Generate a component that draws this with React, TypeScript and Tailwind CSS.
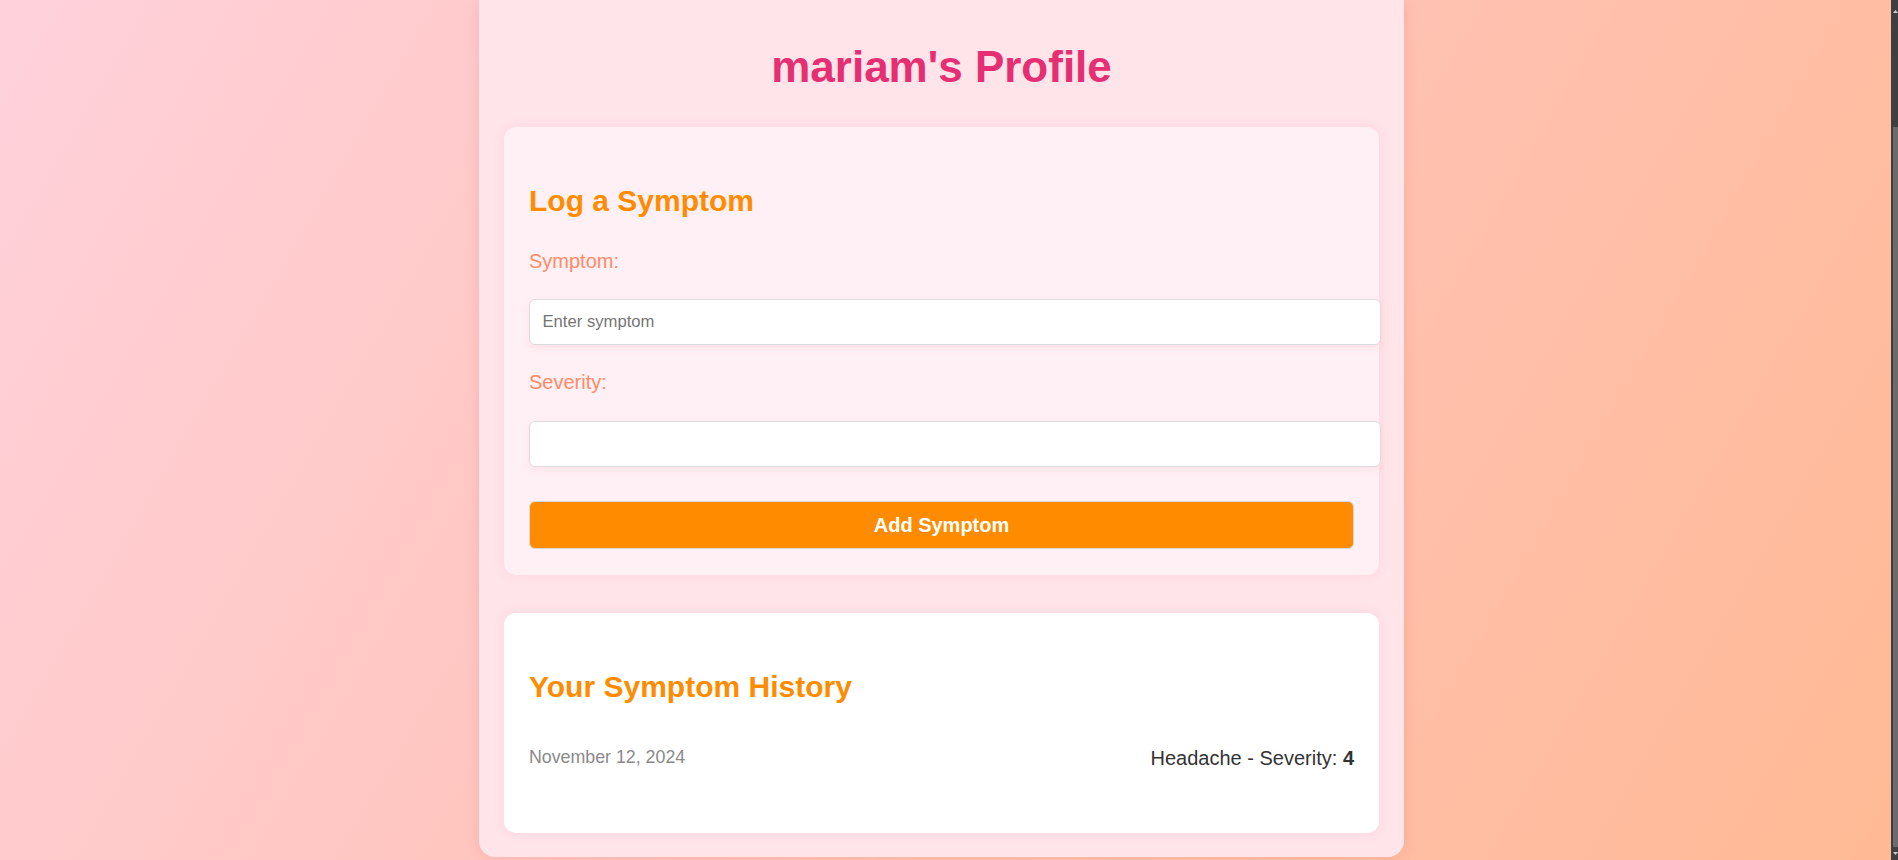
const FONT = { fontFamily: '"Liberation Sans", Arial, sans-serif' };

function Field({ label, placeholder, gapClass }: { label: string; placeholder?: string; gapClass: string }) {
	return (
		<>
			<label className="block leading-[23px] text-[20px] text-[#ff8a65]">{label}</label>
			<input
				type="text"
				placeholder={placeholder}
				className={`${gapClass} box-content block w-full h-[19px] px-[12.5px] py-[12.5px] border border-[#dcdcdc] rounded-[6px] bg-white text-[16.67px] text-[#333] placeholder:text-[#757575] shadow-[0_3px_6px_rgba(255,120,140,0.12)] outline-none`}
			/>
		</>
	);
}

export default function App() {
	return (
		<div className="flex h-[860px] w-full overflow-hidden" style={FONT}>
			{/* page */}
			<div className="flex-1 flex justify-center pr-[8px] bg-[linear-gradient(120deg,#ffd1db_0%,#ffc3b8_50%,#ffb994_100%)]">
				<div className="self-start w-[925px] bg-[#ffe4ea] rounded-b-[16px] px-[25px] pb-[24px] shadow-[0_0_14px_rgba(200,90,90,0.18)]">
					<h1 className="mt-[41px] text-center text-[44px] leading-[51px] font-bold text-[#e62e73]">
						mariam's Profile
					</h1>

					{/* ── Log a symptom ─────────────────────────────── */}
					<div className="mt-[35px] bg-[#fff0f5] rounded-[12px] px-[25px] pt-[25px] pb-[26px] shadow-[0_0_12px_rgba(255,110,140,0.12)]">
						<h2 className="mt-[32px] text-[30px] leading-[34px] font-bold text-[#ff8c00]">Log a Symptom</h2>
						<div className="mt-[32px]">
							<Field label="Symptom:" placeholder="Enter symptom" gapClass="mt-[26px]" />
						</div>
						<div className="mt-[26px]">
							<Field label="Severity:" gapClass="mt-[27px]" />
						</div>
						<button
							type="button"
							className="mt-[34px] block w-full h-[48px] rounded-[6px] border border-[#d8d8d8] bg-[#ff8c00] text-white text-[20px] font-bold"
						>
							Add Symptom
						</button>
					</div>

					{/* ── History ─────────────────────────────────── */}
					<div className="mt-[38px] bg-white rounded-[12px] px-[25px] pt-[25px] pb-[63px] shadow-[0_0_12px_rgba(255,110,140,0.12)]">
						<h2 className="mt-[32px] text-[30px] leading-[34px] font-bold text-[#ff8c00]">Your Symptom History</h2>
						<div className="mt-[43px] flex items-start justify-between">
							<span className="text-[17.8px] leading-[20px] text-[#8a8a8a]">November 12, 2024</span>
							<span className="text-[20px] leading-[23px] text-[#333]">
								Headache - Severity: <b>4</b>
							</span>
						</div>
					</div>
				</div>
			</div>

			{/* scrollbar */}
			<div className="w-[7px] flex flex-col items-end bg-[#3f3f3f]">
				<div className="h-[127px] w-full flex justify-end pt-[9px]">
					<svg width="5" height="5" viewBox="0 0 5 5">
						<path d="M2.5 1 L5 4 L0 4 Z" fill="#cfcfcf" />
					</svg>
				</div>
				<div className="h-[720px] w-[5px] bg-[#6b6b6b]" />
				<div className="flex-1 w-full flex justify-end items-center">
					<svg width="5" height="5" viewBox="0 0 5 5">
						<path d="M0 1 L5 1 L2.5 4 Z" fill="#cfcfcf" />
					</svg>
				</div>
			</div>
		</div>
	);
}
